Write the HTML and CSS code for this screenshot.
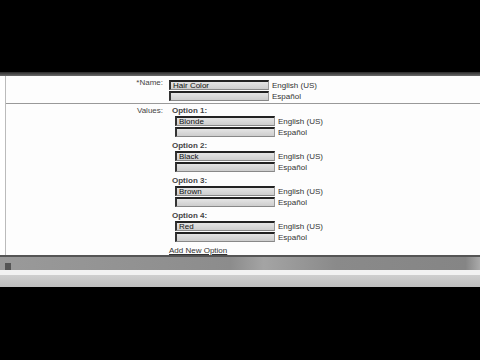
FILE: index.html
```html
<!DOCTYPE html>
<html lang="en">
<head>
    <meta charset="UTF-8">
    <meta name="viewport" content="width=device-width, initial-scale=1.0">
    <title>Attribute</title>
    <link rel="stylesheet" href="styles.css">
</head>
<body>
    <div class="screen">
        <div class="topbar"></div>
        <div class="panel">
            <div class="row name-row">
                <div class="label">*Name:</div>
                <div class="fields name-fields">
                    <div class="field"><span class="box">Hair Color</span><span class="lang">English (US)</span></div>
                    <div class="field"><span class="box"></span><span class="lang">Español</span></div>
                </div>
            </div>
            <div class="row values-row">
                <div class="label">Values:</div>
                <div class="fields options">
                    <div class="option">
                        <div class="option-title">Option 1:</div>
                        <div class="field"><span class="box">Blonde</span><span class="lang">English (US)</span></div>
                        <div class="field"><span class="box"></span><span class="lang">Español</span></div>
                    </div>
                    <div class="option">
                        <div class="option-title">Option 2:</div>
                        <div class="field"><span class="box">Black</span><span class="lang">English (US)</span></div>
                        <div class="field"><span class="box"></span><span class="lang">Español</span></div>
                    </div>
                    <div class="option">
                        <div class="option-title">Option 3:</div>
                        <div class="field"><span class="box">Brown</span><span class="lang">English (US)</span></div>
                        <div class="field"><span class="box"></span><span class="lang">Español</span></div>
                    </div>
                    <div class="option">
                        <div class="option-title">Option 4:</div>
                        <div class="field"><span class="box">Red</span><span class="lang">English (US)</span></div>
                        <div class="field"><span class="box"></span><span class="lang">Español</span></div>
                    </div>
                    <a href="#" class="add-link">Add New Option</a>
                </div>
            </div>
        </div>
        <div class="statusbar"><span class="grip"></span></div>
        <div class="gap"></div>
        <div class="taskbar"></div>
    </div>
</body>
</html>
```

FILE: styles.css
```css
body {
    margin: 0;
    background-color: #000;
    font-family: "Liberation Sans", Arial, sans-serif;
    font-size: 8px;
    color: #333;
}
.screen {
    margin-top: 72px;
    height: 215px;
    background-color: #fff;
    display: flex;
    flex-direction: column;
}
.topbar {
    height: 4px;
    background: linear-gradient(#2a2a2a, #6a6a6a);
}
.panel {
    height: 179px;
    margin-left: 5px;
    border-left: 1px solid #bbb;
    background-color: #fdfdfd;
}
.row {
    display: flex;
}
.name-row {
    height: 27px;
    border-bottom: 1px solid #999;
}
.label {
    width: 157px;
    padding: 2px 6px 0 0;
    text-align: right;
    line-height: 10px;
    color: #444;
}
.name-fields {
    padding-top: 4px;
}
.options {
    padding: 2px 0 0 3px;
}
.field {
    display: flex;
    align-items: center;
    height: 10px;
    margin-bottom: 1px;
}
.box {
    box-sizing: border-box;
    width: 100px;
    height: 10px;
    padding-left: 2px;
    line-height: 7px;
    border-top: 2px solid #222;
    border-left: 2px solid #333;
    border-right: 1px solid #999;
    border-bottom: 1px solid #888;
    background: linear-gradient(#e4e4e4, #cdcdcd);
    color: #111;
}
.lang {
    margin-left: 3px;
}
.option {
    margin-bottom: 4px;
}
.option-title {
    height: 10px;
    line-height: 10px;
    font-weight: bold;
    color: #444;
}
.option .field {
    margin-left: 3px;
}
.add-link {
    display: block;
    margin-left: -3px;
    line-height: 10px;
    color: #333;
}
.statusbar {
    height: 13px;
    border-top: 2px solid #555;
    background: linear-gradient(90deg, #9a9a9a, #8c8c8c 48%, #a4a4a4 55%, #8a8a8a 70%, #858585 97%, #aaa);
    position: relative;
}
.grip {
    position: absolute;
    left: 5px;
    top: 6px;
    width: 6px;
    height: 7px;
    background-color: #555;
}
.gap {
    height: 5px;
    background-color: #f2f2f2;
}
.taskbar {
    height: 12px;
    background: linear-gradient(#cfcfcf, #bdbdbd);
}
```
